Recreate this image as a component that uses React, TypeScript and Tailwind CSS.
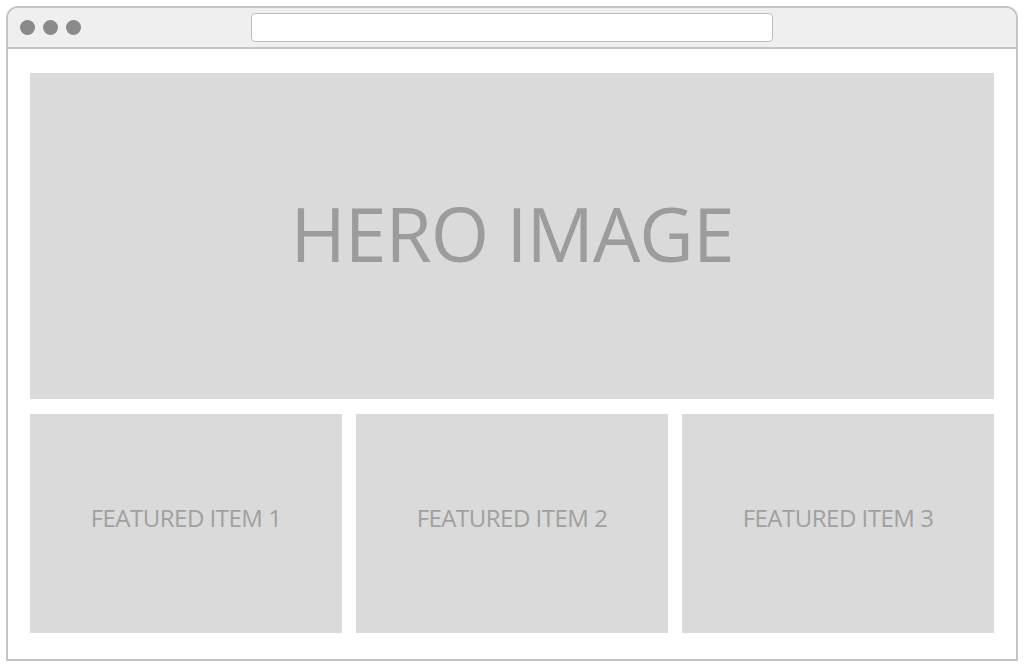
import React from "react";

export default function App() {
  const font = { fontFamily: '"Open Sans", "Liberation Sans", sans-serif' };
  return (
    <div className="w-[1024px] h-[667px] bg-white pt-[6px] pl-[6px]" style={font}>
      <div className="w-[1012px] h-[655px] border-2 border-[#c4c4c4] rounded-t-[12px] flex flex-col overflow-hidden">
        <div className="h-[41px] bg-[#efefef] border-b-2 border-[#c4c4c4] flex items-center shrink-0">
          <div className="flex gap-[8px] pl-[12px]">
            <div className="w-[15px] h-[15px] rounded-full bg-[#8a8a8a]" />
            <div className="w-[15px] h-[15px] rounded-full bg-[#8a8a8a]" />
            <div className="w-[15px] h-[15px] rounded-full bg-[#8a8a8a]" />
          </div>
          <div className="ml-[170px] w-[522px] h-[29px] bg-white border border-[#bdbdbd] rounded-[4px]" />
        </div>
        <div className="flex-1 bg-white pt-[24px] px-[22px] flex flex-col gap-[15px]">
          <div className="h-[326px] bg-[#dadada] flex items-center justify-center pb-[6px]">
            <span className="text-[#9c9c9c] text-[75px] leading-none tracking-[-1px]">HERO IMAGE</span>
          </div>
          <div className="h-[219px] grid grid-cols-3 gap-[14px]">
            {[1, 2, 3].map((n) => (
              <div key={n} className="bg-[#dadada] flex items-center justify-center pb-[12px]">
                <span className="text-[#a0a0a0] text-[24px] leading-none tracking-[-0.5px]">FEATURED ITEM {n}</span>
              </div>
            ))}
          </div>
        </div>
      </div>
    </div>
  );
}
